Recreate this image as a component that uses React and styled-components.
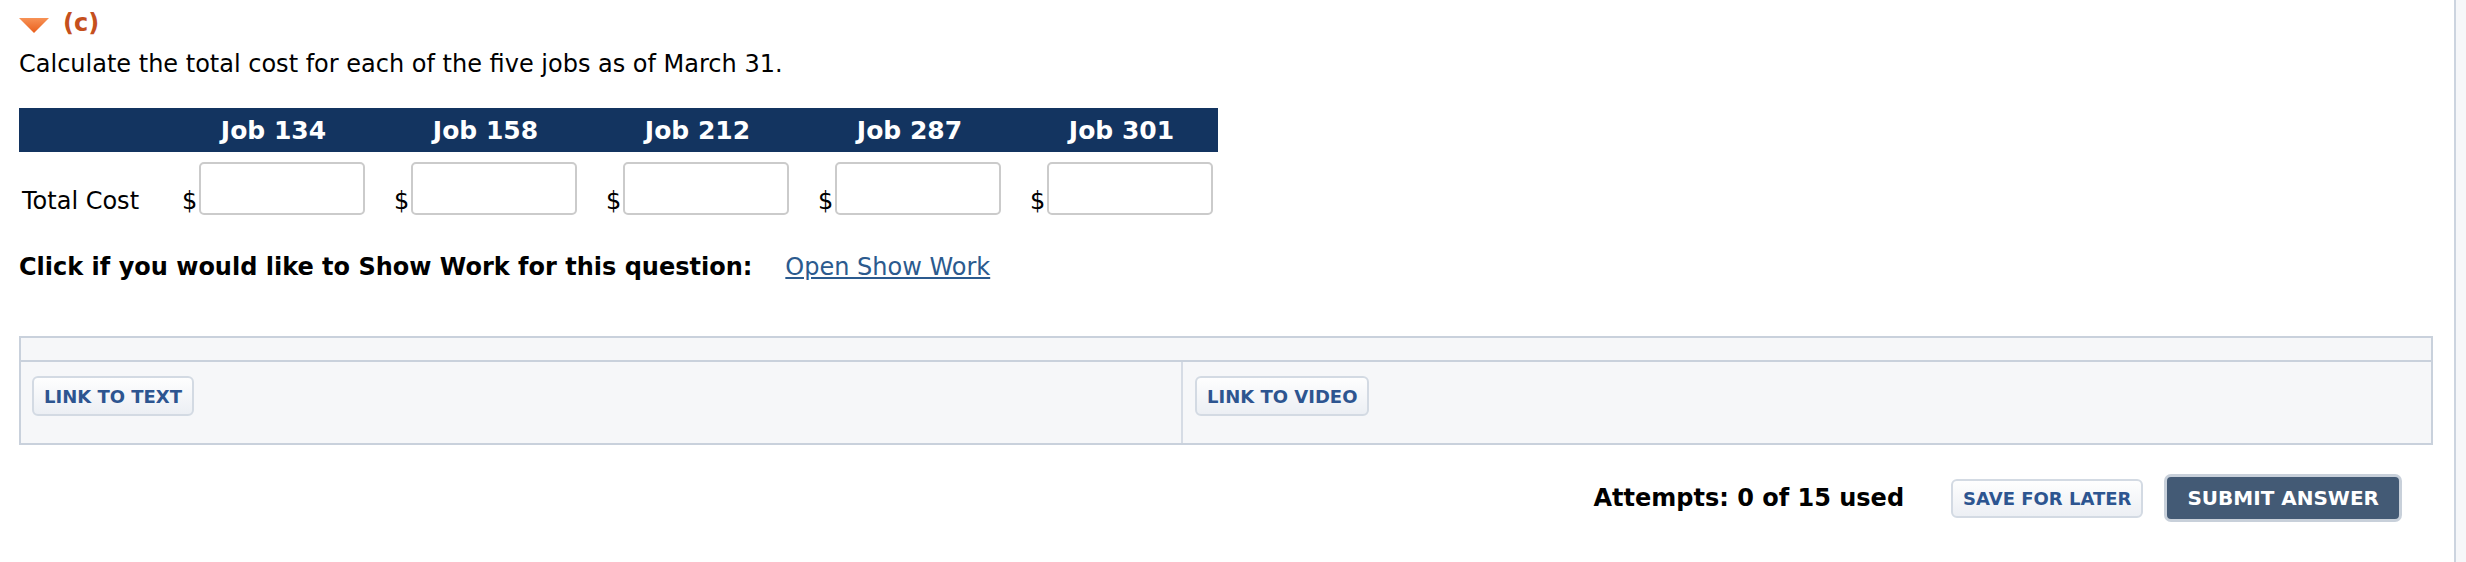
import React from "react";
import styled, { createGlobalStyle } from "styled-components";

const GlobalStyle = createGlobalStyle`
    html, body {
        margin:0;
        padding:0;
        background:#fff;
    }
    body {
        font-family:"DejaVu Sans", Verdana, sans-serif;
        color:#000;
    }
`;

const Page = styled.div`
    display:flex;
    min-height:100vh;
`;

const Main = styled.main`
    flex:1;
    min-width:0;
    box-sizing:border-box;
    padding:8px 21px 0 19px;
`;

const SideRail = styled.aside`
    width:10px;
    border-left:2px solid #ccd4df;
    background:#f6f7f9;
`;

const PartHeading = styled.div`
    display:flex;
    align-items:flex-start;
    gap:14px;
    height:30px;
    font-size:24px;
    line-height:30px;
    font-weight:bold;
    color:#c5501d;
`;

const Caret = styled.svg`
    margin-top:10px;
    flex:none;
`;

const Prompt = styled.p`
    margin:11px 0 0;
    font-size:24px;
    line-height:30px;
`;

const JobTable = styled.table`
    margin-top:29px;
    width:1199px;
    table-layout:fixed;
    border-collapse:collapse;
    border-spacing:0;
    font-size:24px;
`;

const Col = styled.col`
    width:${p => p.$w}px;
`;

const HeadCell = styled.th`
    height:44px;
    padding:0 5px 0 24px;
    background:#133460;
    color:#fff;
    font-size:25px;
    font-weight:bold;
    text-align:center;
    white-space:nowrap;
`;

const LabelCell = styled.td`
    padding:10px 0 0 3px;
    line-height:28px;
    vertical-align:bottom;
    white-space:nowrap;
`;

const AmountCell = styled.td`
    padding:10px 5px 0 24px;
    vertical-align:bottom;
`;

const AmountField = styled.label`
    display:flex;
    align-items:flex-end;
    line-height:28px;
`;

const Dollar = styled.span`
    width:17px;
    flex:none;
`;

const AmountInput = styled.input`
    width:166px;
    height:53px;
    box-sizing:border-box;
    margin:0;
    padding:0 8px;
    border:2px solid #cbcbcb;
    border-radius:5px;
    background:#fff;
    font-family:inherit;
    font-size:20px;
    outline:none;
`;

const ShowWork = styled.div`
    margin-top:38px;
    display:flex;
    align-items:baseline;
    gap:33px;
    font-size:24px;
    line-height:28px;
`;

const ShowWorkLabel = styled.span`
    font-weight:bold;
`;

const ShowWorkLink = styled.a`
    color:#2b5a8e;
    text-decoration:underline;
    cursor:pointer;
`;

const ResourceBox = styled.section`
    margin-top:55px;
    border:2px solid #c9d1dc;
    background:#f6f7f9;
`;

const BoxTop = styled.div`
    height:22px;
    border-bottom:2px solid #c9d1dc;
`;

const BoxRow = styled.div`
    display:grid;
    grid-template-columns:1160px 1fr;
    height:81px;
`;

const BoxCell = styled.div`
    padding:14px 0 0 ${p => (p.$divided ? 12 : 11)}px;
    border-left:${p => (p.$divided ? "2px solid #d6dce5" : "none")};
`;

const LightButton = styled.button`
    height:${p => p.$h || 40}px;
    padding:0 10px;
    border:2px solid #d3dae3;
    border-radius:6px;
    background:linear-gradient(#fefefe, #eceff4);
    color:#2d5590;
    font-family:"DejaVu Sans", Verdana, sans-serif;
    font-size:18px;
    font-weight:bold;
    cursor:pointer;
`;

const Footer = styled.div`
    margin-top:29px;
    padding-right:31px;
    display:flex;
    justify-content:flex-end;
    align-items:center;
`;

const Attempts = styled.span`
    margin-right:47px;
    font-size:24px;
    font-weight:bold;
`;

const SubmitButton = styled.button`
    margin-left:21px;
    height:48px;
    padding:0 20px;
    border:3px solid #c8d0da;
    border-radius:7px;
    background:#435a75;
    color:#fff;
    font-family:"DejaVu Sans", Verdana, sans-serif;
    font-size:20px;
    font-weight:bold;
    cursor:pointer;
`;

const jobs = ["Job 134", "Job 158", "Job 212", "Job 287", "Job 301"];

export default function App(){
    return <>
        <GlobalStyle />
        <Page>
            <Main>
                <PartHeading>
                    <Caret width="30" height="15" viewBox="0 0 30 15">
                        <defs>
                            <linearGradient id="caretFill" x1="0" y1="0" x2="0" y2="1">
                                <stop offset="0" stopColor="#f79256" />
                                <stop offset="1" stopColor="#e95f1c" />
                            </linearGradient>
                        </defs>
                        <polygon points="0,0 30,0 15,15" fill="url(#caretFill)" />
                    </Caret>
                    <span>(c)</span>
                </PartHeading>

                <Prompt>Calculate the total cost for each of the five jobs as of March 31.</Prompt>

                <JobTable>
                    <colgroup>
                        <Col $w={139} />
                        {jobs.map(j => <Col key={j} $w={212} />)}
                    </colgroup>
                    <thead>
                        <tr>
                            <HeadCell style={{ padding: 0 }}></HeadCell>
                            {jobs.map(j => <HeadCell key={j}>{j}</HeadCell>)}
                        </tr>
                    </thead>
                    <tbody>
                        <tr>
                            <LabelCell>Total Cost</LabelCell>
                            {jobs.map(j => (
                                <AmountCell key={j}>
                                    <AmountField>
                                        <Dollar>$</Dollar>
                                        <AmountInput type="text" aria-label={j} />
                                    </AmountField>
                                </AmountCell>
                            ))}
                        </tr>
                    </tbody>
                </JobTable>

                <ShowWork>
                    <ShowWorkLabel>Click if you would like to Show Work for this question:</ShowWorkLabel>
                    <ShowWorkLink>Open Show Work</ShowWorkLink>
                </ShowWork>

                <ResourceBox>
                    <BoxTop />
                    <BoxRow>
                        <BoxCell>
                            <LightButton>LINK TO TEXT</LightButton>
                        </BoxCell>
                        <BoxCell $divided>
                            <LightButton>LINK TO VIDEO</LightButton>
                        </BoxCell>
                    </BoxRow>
                </ResourceBox>

                <Footer>
                    <Attempts>Attempts: 0 of 15 used</Attempts>
                    <LightButton $h={39}>SAVE FOR LATER</LightButton>
                    <SubmitButton>SUBMIT ANSWER</SubmitButton>
                </Footer>
            </Main>
            <SideRail />
        </Page>
    </>
}
